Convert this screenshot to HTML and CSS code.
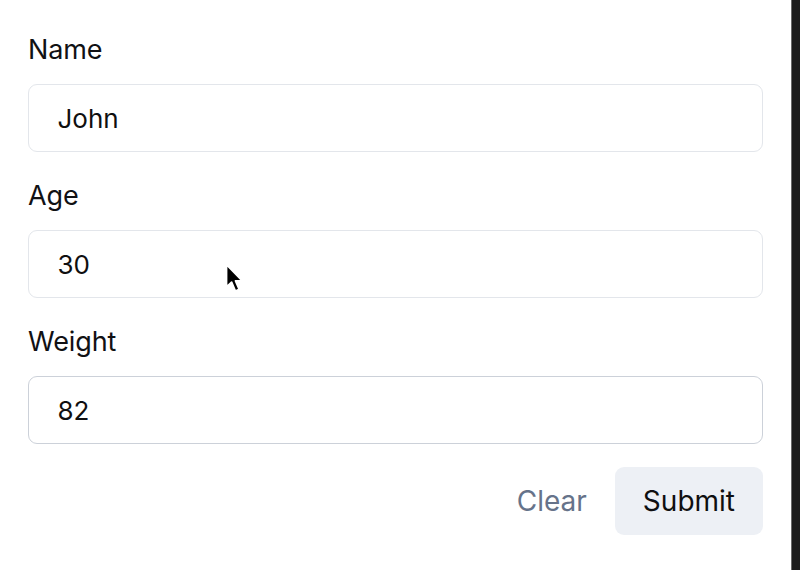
FILE: index.html
```html
<!DOCTYPE html>
<html>
<head>
<meta charset="utf-8">
<link rel="stylesheet" href="styles.css">
</head>
<body>
<div class="screen">
  <main class="panel">
    <form class="form">
      <div class="field">
        <label class="label">Name</label>
        <div class="input">John</div>
      </div>
      <div class="field">
        <label class="label">Age</label>
        <div class="input">30</div>
      </div>
      <div class="field">
        <label class="label">Weight</label>
        <div class="input input-active">82</div>
      </div>
      <div class="actions">
        <span class="btn btn-ghost">Clear</span>
        <span class="btn btn-primary">Submit</span>
      </div>
    </form>
    <svg class="cursor" width="20" height="32" viewBox="0 0 20 32">
      <path d="M1.5 1.5 L1.5 24 L6.6 19.2 L10.4 28 L14.2 26.3 L10.5 17.8 L17.3 17.8 Z" fill="#000" stroke="#fff" stroke-width="1.8" stroke-linejoin="round"/>
    </svg>
  </main>
  <div class="edge"></div>
</div>
</body>
</html>
```
FILE: styles.css
```css
html, body {
  margin: 0;
  padding: 0;
  background: #ffffff;
}
.screen {
  display: flex;
  width: 800px;
  height: 570px;
  overflow: hidden;
}
.panel {
  position: relative;
  flex: 1;
  background: #ffffff;
  font-family: Inter, "Liberation Sans", sans-serif;
  color: #111114;
}
.form {
  display: flex;
  flex-direction: column;
  gap: 28px;
  padding: 34px 28px 0 28px;
}
.field {
  display: flex;
  flex-direction: column;
  gap: 18px;
}
.label {
  font-size: 27px;
  line-height: 32px;
  letter-spacing: -0.1px;
}
.input {
  box-sizing: border-box;
  height: 68px;
  border: 1.5px solid #e3e6eb;
  border-radius: 9px;
  padding: 0 28.5px;
  display: flex;
  align-items: center;
  font-size: 26px;
  color: #0f0f10;
}
.input-active {
  border-color: #ccd1d9;
}
.actions {
  display: flex;
  justify-content: flex-end;
  margin-top: -5px;
}
.btn {
  box-sizing: border-box;
  height: 68px;
  display: flex;
  align-items: center;
  padding: 0 28px;
  border-radius: 9px;
  font-size: 28px;
}
.btn-ghost {
  color: #66738a;
}
.btn-primary {
  background: #edf0f5;
  color: #0f0f10;
}
.cursor {
  position: absolute;
  left: 225px;
  top: 263px;
}
.edge {
  width: 8px;
  background: #1c1c1c;
  border-left: 1px solid #6a6a6a;
}
```
